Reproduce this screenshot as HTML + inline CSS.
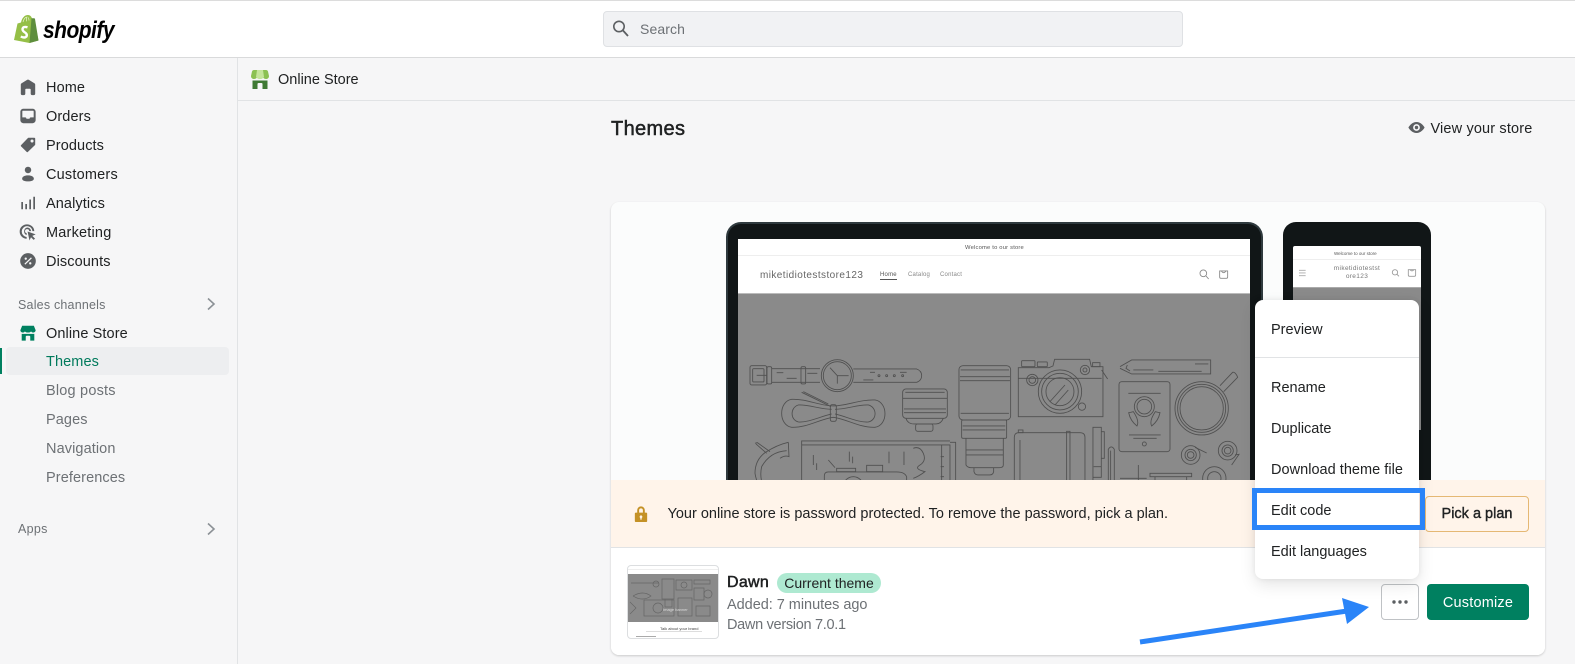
<!DOCTYPE html>
<html lang="en"><head><meta charset="utf-8"><title>Themes</title>
<style>
html,body{margin:0;padding:0}
body{width:1575px;height:664px;overflow:hidden;position:relative;background:#f6f6f7;font-family:"Liberation Sans",sans-serif;color:#202223;font-size:14.5px}
.a{position:absolute}
.t{position:absolute;line-height:20px;height:20px;white-space:nowrap;letter-spacing:.1px;margin-top:1px}
.ic{position:absolute;width:18px;height:18px;fill:#5c5f62}
.g{color:#6d7175}
.m{color:#202223;left:1271px;letter-spacing:0}
.s{-webkit-text-stroke:.5px currentColor}
svg.art{position:absolute;left:0;top:0;filter:blur(.35px)}
svg.art .l *{fill:none;stroke:#505050;stroke-width:2.6}
</style></head><body>
<!-- top bar -->
<div class="a" style="left:0;top:0;width:1575px;background:#fff;border-top:1px solid #dcdcdc;box-sizing:border-box;border-bottom:1px solid #d9dadb;height:58px"></div>
<svg class="a" style="left:14px;top:15px" width="25" height="28" viewBox="0 0 25 28"><path d="M0 25L3.500 8.500 7 7.500C8 3 10.500 0 14 0c2 0 3.500 1.500 4 3.500L20 3.500 24.500 25.500 15.500 28z" fill="#95bf47"/><path d="M17.500 3.300L20 3.300c.5 0 .8.300 1 .7L24.500 25.500 15.500 28z" fill="#5e8e3e"/><path d="M9 7c.8-3 2.500-5 4.500-5M12.500 6.300c.3-1.500.3-3-.2-4.300M15 5.500c0-1-.2-2-.7-3" stroke="#e8f3d2" stroke-width=".7" fill="none"/><path d="M13.500 12.300Q9 11 8.500 14Q8.500 16 11 17.500Q13.500 19 12.500 21.500Q10.500 23.500 6.800 21.500" fill="none" stroke="#fff" stroke-width="2.400"/></svg>
<div class="a" style="left:43px;top:14px;font:italic bold 24px/34px 'Liberation Sans',sans-serif;color:#000;letter-spacing:-.6px;transform:scaleX(.875);transform-origin:0 0">shopify</div>
<div class="a" style="left:603px;top:11px;width:580px;height:36px;box-sizing:border-box;background:#f1f2f4;border:1px solid #dfe1e4;border-radius:4px"></div>
<svg class="a" style="left:612px;top:19px" width="18" height="19" viewBox="0 0 18 19"><circle cx="7" cy="7.500" r="5.200" fill="none" stroke="#5c5f62" stroke-width="1.600"/><path d="M11 11.500l5 5.500" stroke="#5c5f62" stroke-width="1.800" fill="none"/></svg>
<div class="t g" style="left:640px;top:18px;font-size:14px">Search</div>

<!-- sidebar -->
<div class="a" style="left:237px;top:58px;width:1px;height:606px;background:#e1e3e5"></div>
<svg class="ic" style="left:19px;top:78px" viewBox="0 0 20 20"><path d="M18 7.300V17.500c0 .8-.7 1.500-1.500 1.500h-2c-.8 0-1.500-.7-1.500-1.500V13c0-.6-.4-1-1-1H8c-.6 0-1 .4-1 1v4.500c0 .8-.7 1.500-1.500 1.500h-2C2.700 19 2 18.300 2 17.500V7.300c0-.5.300-1 .7-1.300l6.500-4a1.500 1.500 0 0 1 1.600 0l6.500 4c.4.300.7.800.7 1.300z"/></svg>
<svg class="ic" style="left:19px;top:107px" viewBox="0 0 20 20"><path fill-rule="evenodd" d="M5 2h10c2 0 3.500 1.500 3.500 3.500v9c0 2-1.500 3.500-3.500 3.500H5c-2 0-3.500-1.500-3.500-3.500v-9C1.500 3.500 3 2 5 2zM4.500 4.200c-.5 0-.8.300-.8.800v6.500h3.300c.6 0 1 .4 1.100.9l.2.600h3.400l.2-.6c.1-.5.500-.9 1.100-.9h3.300V5c0-.5-.3-.8-.8-.8z"/></svg>
<svg class="ic" style="left:19px;top:136px" viewBox="0 0 20 20"><path fill-rule="evenodd" d="M10.500 2H17c.6 0 1 .4 1 1v6.500c0 .3-.1.500-.3.700l-7.800 7.500c-.4.400-1 .4-1.400 0l-6.200-6.200c-.4-.4-.4-1 0-1.400l7.500-7.800c.2-.2.400-.3.700-.3zM14.500 7.300a1.700 1.700 0 1 0 0-3.400 1.700 1.700 0 0 0 0 3.400z"/></svg>
<svg class="ic" style="left:19px;top:165px" viewBox="0 0 20 20"><circle cx="10" cy="5.500" r="3.600"/><path d="M3.500 15.300C3.500 12.800 6.300 11.500 10 11.500s6.500 1.300 6.500 3.800c0 2-2.800 2.900-6.500 2.900s-6.500-.9-6.500-2.900z"/></svg>
<svg class="ic" style="left:19px;top:194px" viewBox="0 0 18 18"><path d="M2.300 8h1.700v7.300H2.300zM6.300 10h1.700v5.300H6.300zM10.300 5.500h1.700v9.800h-1.700zM14.300 2.700h1.700v12.600h-1.700z"/></svg>
<svg class="ic" style="left:19px;top:223px" viewBox="0 0 20 20"><path fill-rule="evenodd" d="M9 1.500a8 8 0 0 1 8 7.500h-2a6 6 0 1 0-6.500 6.500v2A8 8 0 0 1 9 1.500zM9 5a4.500 4.500 0 0 1 4.500 4h-2.200A2.300 2.300 0 1 0 8.500 11.300v2.200A4.500 4.500 0 0 1 9 5z"/><path d="M9.500 9.500l9 3.200-3.700 1.600 3 3-1.500 1.500-3-3-1.600 3.700z"/></svg>
<svg class="ic" style="left:19px;top:252px" viewBox="0 0 20 20"><path fill-rule="evenodd" d="M10 1.300a8.700 8.700 0 1 1 0 17.400 8.700 8.700 0 0 1 0-17.400zM7.500 8.700a1.300 1.300 0 1 0 0-2.600 1.300 1.300 0 0 0 0 2.600zM12.500 13.900a1.300 1.300 0 1 0 0-2.600 1.300 1.300 0 0 0 0 2.600zM13.300 6L6 13l1 1 7.300-7z"/></svg>
<div class="t" style="left:46px;top:77px">Home</div>
<div class="t" style="left:46px;top:106px">Orders</div>
<div class="t" style="left:46px;top:135px">Products</div>
<div class="t" style="left:46px;top:164px;letter-spacing:.2px">Customers</div>
<div class="t" style="left:46px;top:193px">Analytics</div>
<div class="t" style="left:46px;top:222px;letter-spacing:.2px">Marketing</div>
<div class="t" style="left:46px;top:251px">Discounts</div>
<div class="t g" style="left:18px;top:294px;font-size:12.500px;letter-spacing:.2px">Sales channels</div>
<svg class="a" style="left:205px;top:297px" width="12" height="14" viewBox="0 0 12 14"><path d="M3 1.500l6 5.500-6 5.500" fill="none" stroke="#8c9196" stroke-width="1.600"/></svg>
<svg class="a" style="left:19px;top:324px" width="18" height="18" viewBox="0 0 20 20"><path d="M3.500 2h13l2 5c0 1.500-1.300 2.500-2.700 2.500-1 0-1.900-.5-2.400-1.300-.6.800-1.500 1.300-3.400 1.300s-2.800-.5-3.400-1.300c-.5.800-1.400 1.300-2.400 1.300C2.800 9.500 1.500 8.500 1.500 7z" fill="#008060"/><path fill-rule="evenodd" d="M3 11h14v7.500h-4.500V14a1 1 0 0 0-1-1h-3a1 1 0 0 0-1 1v4.500H3z" fill="#008060"/></svg>
<div class="t" style="left:46px;top:323px">Online Store</div>
<div class="a" style="left:6px;top:347px;width:223px;height:28px;background:#edeef0;border-radius:4px"></div>
<div class="a" style="left:0;top:348px;width:2px;height:26px;background:#008060"></div>
<div class="t" style="left:46px;top:351px;color:#007a5c">Themes</div>
<div class="t g" style="left:46px;top:380px;letter-spacing:.2px">Blog posts</div>
<div class="t g" style="left:46px;top:409px">Pages</div>
<div class="t g" style="left:46px;top:438px">Navigation</div>
<div class="t g" style="left:46px;top:467px">Preferences</div>
<div class="t g" style="left:18px;top:518px;font-size:12.500px;letter-spacing:.3px">Apps</div>
<svg class="a" style="left:205px;top:522px" width="12" height="14" viewBox="0 0 12 14"><path d="M3 1.500l6 5.500-6 5.500" fill="none" stroke="#8c9196" stroke-width="1.600"/></svg>

<!-- subheader -->
<div class="a" style="left:238px;top:100px;width:1337px;height:1px;background:#e1e3e5"></div>
<svg class="a" style="left:251px;top:70px" width="18" height="19" viewBox="0 0 18 19"><path d="M3 0h12q1.500 0 2 1.500L18 6c0 2-1.500 3-3 3-1.200 0-2.300-.6-3-1.500C11.200 8.400 10.300 9 9 9s-2.200-.6-3-1.500C5.300 8.400 4.200 9 3 9 1.500 9 0 8 0 6L1 1.500Q1.500 0 3 0z" fill="#8cc152"/><path d="M6 0h6l1 7c-.8 1.200-2.200 2-4 2s-3.200-.8-4-2z" fill="#c5e59a"/><path d="M1.500 10.500h15V19h-5v-5a1 1 0 0 0-1-1h-3a1 1 0 0 0-1 1v5h-5z" fill="#3f7a34"/></svg>
<div class="t" style="left:278px;top:69px;letter-spacing:0">Online Store</div>

<!-- title -->
<div class="a s" style="left:611px;top:115px;font-size:20px;line-height:28px;color:#202223;letter-spacing:.35px">Themes</div>
<svg class="a" style="left:1408px;top:119px" width="17" height="17" viewBox="0 0 20 20"><path fill-rule="evenodd" d="M10 3.500c5 0 8.500 4.500 9.500 6.500-1 2-4.500 6.500-9.500 6.500S1.500 12 .5 10C1.500 8 5 3.500 10 3.500zM10 6a4 4 0 1 0 0 8 4 4 0 0 0 0-8zM10 8a2 2 0 1 1 0 4 2 2 0 0 1 0-4z" fill="#5c5f62"/></svg>
<div class="t" style="left:1430.500px;top:118px;letter-spacing:.15px">View your store</div>

<!-- card -->
<div class="a" style="left:611px;top:202px;width:934px;height:453px;background:#fbfcfc;border-radius:8px;box-shadow:0 1px 2px rgba(0,0,0,.18)"></div>
<div class="a" style="left:611px;top:548px;width:934px;height:107px;background:#fff;border-radius:0 0 8px 8px"></div>

<!-- devices -->
<div class="a" style="left:726px;top:222px;width:537px;height:260px;background:#111617;border:2px solid #2f3a3e;border-bottom:0;border-radius:15px 15px 0 0;box-sizing:border-box"></div>
<div class="a" style="left:738px;top:239px;width:512px;height:243px;background:#fff"></div>
<div class="a" style="left:738px;top:255px;width:512px;height:1px;background:#eee"></div>
<div class="a" style="left:738px;top:293px;width:512px;height:190px;background:#8a8a8a;border-top:1px solid #bbb;box-sizing:border-box"></div>
<div class="a" style="left:965px;top:243px;font-size:5.800px;line-height:10px;color:#555;letter-spacing:.2px">Welcome to our store</div>
<div class="a" style="left:760px;top:270px;font-size:10px;line-height:12px;color:#666;letter-spacing:.42px">miketidioteststore123</div>
<div class="a" style="left:880px;top:271px;font-size:6px;line-height:8px;color:#555;border-bottom:1px solid #555;letter-spacing:.2px">Home</div>
<div class="a" style="left:908px;top:271px;font-size:6px;line-height:8px;color:#888;letter-spacing:.2px">Catalog</div>
<div class="a" style="left:940px;top:271px;font-size:6px;line-height:8px;color:#888;letter-spacing:.2px">Contact</div>

<div class="a" style="left:1283px;top:222px;width:148px;height:260px;background:#111617;border-radius:13px 13px 0 0"></div>
<div class="a" style="left:1293px;top:246px;width:128px;height:184px;background:#fff;border-radius:2px 2px 0 0"></div>
<div class="a" style="left:1293px;top:259px;width:128px;height:1px;background:#eee"></div>
<div class="a" style="left:1293px;top:287px;width:128px;height:143px;background:#8a8a8a;border-top:1px solid #aaa;box-sizing:border-box"></div>
<div class="a" style="left:1334px;top:249px;font-size:4.500px;line-height:9px;color:#555">Welcome to our store</div>
<div class="a" style="left:1328px;top:265px;width:58px;text-align:center;font-size:6.500px;line-height:7.500px;color:#777;letter-spacing:.35px">miketidiotestst<br>ore123</div>

<svg class="art" width="1575" height="664" viewBox="0 0 1575 664">
<defs><clipPath id="c"><rect x="738" y="293" width="512" height="187"/></clipPath></defs>
<g class="l">
<!-- header icons -->
<g transform="translate(1120 210) scale(.3333)">
<circle cx="250" cy="190" r="10" style="stroke:#888"/><path d="M258 198l8 9" style="stroke:#888"/>
<path d="M299 183h24v18q0 4-4 4h-16q-4 0-4-4zM304 183q7 10 14 0" style="stroke:#888"/>
<path d="M537 181h20M537 189h20M537 197h20" style="stroke:#aaa"/>
<circle cx="825" cy="187" r="8" style="stroke:#999"/><path d="M831 193l6 6" style="stroke:#999"/>
<path d="M865 179h22v16q0 4-4 4h-14q-4 0-4-4zM870 179q6 8 12 0" style="stroke:#999"/>
</g>
<g clip-path="url(#c)">
<g transform="translate(720 210) scale(.3333)">
<!-- watch -->
<rect x="90" y="467" width="50" height="58" rx="5"/><rect x="98" y="476" width="34" height="40" rx="3"/>
<path d="M110 496h30M155 476h145M155 517h145"/>
<rect x="141" y="470" width="14" height="52" rx="4"/><rect x="243" y="470" width="14" height="52" rx="4"/>
<path d="M400 477h190q15 5 15 20t-15 20H400"/>
<circle cx="352" cy="497" r="48"/><circle cx="352" cy="497" r="42"/>
<path d="M352 497l-22-24M352 497v24M352 497h34M170 488h20M200 505h30M262 490h30M450 487h15M540 487h20M430 510h30"/>
<circle cx="477" cy="497" r="3"/><circle cx="500" cy="497" r="3"/><circle cx="523" cy="497" r="3"/><circle cx="548" cy="497" r="3"/>
<!-- bow -->
<path d="M340 588C300 588 260 566 215 568C175 574 175 646 215 652C260 654 300 627 340 622M340 588C380 588 420 568 465 570C505 576 505 646 465 652C420 654 380 627 340 622"/>
<path d="M335 598C300 598 265 583 235 585C210 592 210 630 235 636C265 638 300 620 335 612M345 598C380 598 415 583 445 585C472 592 472 630 445 636C415 638 380 620 345 612"/>
<rect x="331" y="584" width="18" height="50" rx="5"/><path d="M333 590L245 547M325 582L250 545"/>
<!-- lens 1 -->
<rect x="548" y="537" width="134" height="88" rx="10"/><path d="M556 547h118M548 565h134M552 597h126M552 608h126M558 625q5 17 25 17h65q15 0 22-17"/><rect x="587" y="642" width="52" height="22" rx="6"/>
<!-- lens 2 -->
<rect x="717" y="467" width="155" height="163" rx="12"/><path d="M722 480h145M720 500h150M720 512h150M722 610h145"/>
<rect x="725" y="630" width="135" height="55" rx="4"/><path d="M728 648h128M728 660h128"/><path d="M738 685v80q5 8 15 8h85q12 0 12-8v-80M738 720h112M738 735h112"/><path d="M762 773v12q3 10 12 10h35q10 0 12-10v-12"/>
<!-- camera -->
<path d="M895 620V473h92l12-5 5-20h105l5 22h35v150z"/><path d="M895 505h250"/>
<rect x="905" y="452" width="40" height="18" rx="2"/><rect x="952" y="456" width="30" height="14" rx="2"/><rect x="1118" y="458" width="22" height="12"/>
<path d="M1145 480l18 27"/>
<circle cx="937" cy="510" r="17"/><circle cx="937" cy="510" r="10"/><circle cx="1095" cy="480" r="14"/><circle cx="1095" cy="480" r="6"/>
<circle cx="1020" cy="545" r="65"/><circle cx="1020" cy="545" r="55"/><circle cx="1020" cy="545" r="42"/><path d="M990 575l45-50M1005 585l40-45"/><circle cx="1086" cy="590" r="11"/>
<!-- notebook -->
<path d="M883 830V682q0-14 14-14h183q15 0 15 14v148"/><path d="M900 690v130"/><rect x="895" y="660" width="14" height="8"/><rect x="1040" y="664" width="10" height="160"/>
<!-- pens -->
<path d="M1119 830V652h25v150h-25M1144 665h9v80h-9M1121 770h23M1165 830V718q9-14 18 0v112M1172 722v100"/>
<!-- glasses -->
<path d="M108 702L140 730M105 700L112 698L150 725M205 697L207 740Q195 735 180 745M205 697Q170 705 135 728Q105 750 105 790Q108 810 118 830M200 722Q150 725 125 770Q118 800 130 830"/>
<!-- map -->
<path d="M245 830V693h445M245 705h445V830M690 697h17V830"/><path d="M280 735v30M290 760v20M388 725v30M398 740v20M507 725v35M552 725v40M580 715q20-8 30 15t-10 35 15 20q-20 15-35 20"/><path d="M665 705v120M672 740h-10M672 770h-10M672 800h-10"/>
<path d="M325 750l20 23"/><rect x="350" y="775" width="57" height="10"/><rect x="440" y="766" width="48" height="19"/>
<path d="M313 830v-32q0-12 12-12h205q25 0 30 15v30"/>
<circle cx="400" cy="830" r="30"/>
</g>
<g transform="translate(1120 210) scale(.3333)">
<path d="M0 470l35-20h237v42H35L0 475M22 465l-4 10 12 8M40 480h60M115 484h130M225 462h40"/>
<rect x="-3" y="515" width="153" height="210" rx="8"/><path d="M25 550h97M27 675h95M40 685h70"/>
<circle cx="73" cy="590" r="30"/><circle cx="73" cy="590" r="22"/><circle cx="73" cy="702" r="6"/>
<path d="M40 605q-10 3-14 3 5 25 25 40 8-15-11-43zM106 605q10 3 14 3-5 25-25 40-8-15 11-43z"/>
<circle cx="245" cy="595" r="80"/><circle cx="245" cy="595" r="72"/><circle cx="245" cy="595" r="65"/>
<path d="M300 527l38-40q8-2 15 15l-42 43"/>
<circle cx="212" cy="735" r="28"/><circle cx="212" cy="735" r="17"/><circle cx="212" cy="735" r="10"/><path d="M225 712l35 17"/>
<circle cx="323" cy="722" r="28"/><circle cx="323" cy="722" r="17"/><circle cx="323" cy="722" r="10"/><path d="M345 735l12-2-22 32"/>
<circle cx="283" cy="805" r="35"/><circle cx="283" cy="805" r="20"/>
<path d="M55 765v50M0 805h80M90 790h125v10H90zM105 800v30M200 800v30"/>
</g>
</g>
</g>
</svg>

<!-- banner -->
<div class="a" style="left:611px;top:480px;width:934px;height:68px;background:#fff4ea;border-bottom:1px solid #e1e3e5;box-sizing:border-box"></div>
<svg class="a" style="left:634px;top:505px" width="14" height="18" viewBox="0 0 14 19"><path fill-rule="evenodd" d="M3 8V5.500a4 4 0 0 1 8 0V8h1.500c.5 0 1 .5 1 1v8c0 .5-.5 1-1 1h-11c-.5 0-1-.5-1-1V9c0-.5.5-1 1-1zM5 8h4V5.500a2 2 0 0 0-4 0zM7 11a1.500 1.500 0 0 0-.7 2.800V15.500h1.400v-1.700A1.500 1.500 0 0 0 7 11z" fill="#c49126"/></svg>
<div class="t" style="left:667.500px;top:503px;letter-spacing:0">Your online store is password protected. To remove the password, pick a plan.</div>
<div class="a s" style="left:1425px;top:496px;width:104px;height:36px;box-sizing:border-box;border:1px solid #e5b874;border-radius:4px;text-align:center;font-size:14.500px;line-height:35px;color:#202223;-webkit-text-stroke:.4px #202223">Pick a plan</div>

<!-- theme row -->
<div class="a" style="left:627px;top:565px;width:92px;height:74px;box-sizing:border-box;background:#fff;border:1px solid #dcdee0;border-radius:4px;overflow:hidden">
<div class="a" style="left:0;top:8px;width:90px;height:48px;background:#8a8a8a"></div>
<svg class="a" style="left:0;top:8px" width="90" height="48" viewBox="0 0 90 48" fill="none" stroke="#656565" stroke-width=".7"><path d="M3 9h28M5 22q10-6 18 0-8 6-18 0M34 5h12v20H34zM37 25v8h7v-8M48 6h16v10H48zM66 6h16v4H66zM66 14h10v12H66z"/><circle cx="28" cy="10" r="3"/><circle cx="56" cy="11" r="3"/><circle cx="80" cy="20" r="4"/><rect x="16" y="26" width="30" height="16"/><circle cx="30" cy="34" r="5"/><rect x="50" y="24" width="14" height="18"/><path d="M2 28l6 6-6 6M68 32h14v10H68z"/></svg>
<div class="a" style="left:35px;top:41px;font-size:4px;line-height:6px;color:#ddd;white-space:nowrap">Image banner</div>
<div class="a" style="left:32px;top:60px;font-size:4px;line-height:6px;color:#444;white-space:nowrap">Talk about your brand</div>
<div class="a" style="left:18px;top:65px;width:56px;height:1px;background:#ddd"></div>
<div class="a" style="left:8px;top:70px;width:20px;height:1px;background:#aaa"></div>
<div class="a" style="left:0;top:3px;width:90px;height:1px;background:#eee"></div>
</div>
<div class="t s" style="left:727px;top:572px;font-size:16px;letter-spacing:.3px">Dawn</div>
<div class="a" style="left:777px;top:573px;width:104px;height:20px;background:#aee9d1;border-radius:10px;text-align:center;line-height:20px;font-size:14px;letter-spacing:0">Current theme</div>
<div class="t g" style="left:727px;top:594px;letter-spacing:-.03px">Added: 7 minutes ago</div>
<div class="t g" style="left:727px;top:614px;letter-spacing:-.3px">Dawn version 7.0.1</div>
<div class="a" style="left:1381px;top:584px;width:38px;height:36px;box-sizing:border-box;background:#fff;border:1px solid #bfc2c5;border-radius:4px"></div>
<svg class="a" style="left:1391px;top:598px" width="18" height="8" viewBox="0 0 18 8"><circle cx="3" cy="4" r="1.700" fill="#5c5f62"/><circle cx="9" cy="4" r="1.700" fill="#5c5f62"/><circle cx="15" cy="4" r="1.700" fill="#5c5f62"/></svg>
<div class="a" style="left:1427px;top:584px;width:102px;height:36px;background:#008060;border-radius:4px;color:#fff;text-align:center;line-height:38px;font-size:14.500px;letter-spacing:.2px">Customize</div>

<!-- menu -->
<div class="a" style="left:1255px;top:300px;width:164px;height:279px;background:#fff;border-radius:8px;box-shadow:0 0 6px rgba(0,0,0,.07),0 6px 16px rgba(0,0,0,.1)"></div>
<div class="a" style="left:1255px;top:357px;width:164px;height:1px;background:#e1e3e5"></div>
<div class="t m" style="top:319px">Preview</div>
<div class="t m" style="top:377px">Rename</div>
<div class="t m" style="top:418px">Duplicate</div>
<div class="t m" style="top:459px;letter-spacing:.03px">Download theme file</div>
<div class="t m" style="top:500px">Edit code</div>
<div class="t m" style="top:541px">Edit languages</div>
<div class="a" style="left:1252px;top:488px;width:173px;height:42px;box-sizing:border-box;border:5px solid #2a84f8"></div>

<!-- arrow -->
<svg class="a" style="left:0;top:0" width="1575" height="664" viewBox="0 0 1575 664"><path d="M1140 642l207-31" stroke="#2a84f8" stroke-width="5" fill="none"/><path d="M1342 598l27 9-22 17z" fill="#2a84f8"/></svg>
</body></html>
